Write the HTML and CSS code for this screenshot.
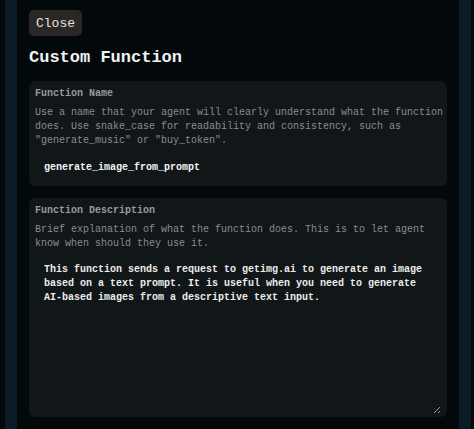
FILE: index.html
```html
<!DOCTYPE html>
<html lang="en">
<head>
    <meta charset="UTF-8">
    <title>Custom Function</title>
    <link rel="stylesheet" href="styles.css">
</head>
<body>
<div class="page">
    <div class="frame">
        <button class="close">Close</button>
        <h1>Custom Function</h1>

        <div class="card">
            <div class="label">Function Name</div>
            <p class="hint">Use a name that your agent will clearly understand what the function does. Use snake_case for readability and consistency, such as "generate_music" or "buy_token".</p>
            <input class="field" type="text" value="generate_image_from_prompt">
        </div>

        <div class="card">
            <div class="label">Function Description</div>
            <p class="hint">Brief explanation of what the function does. This is to let agent know when should they use it.</p>
            <textarea class="field area">This function sends a request to getimg.ai to generate an image based on a text prompt. It is useful when you need to generate AI-based images from a descriptive text input.</textarea>
        </div>
    </div>
</div>
</body>
</html>
```

FILE: styles.css
```css
html, body {
    margin: 0;
    height: 100%;
    background-color: #030a0d;
}

body {
    font-family: "Liberation Mono", "DejaVu Sans Mono", monospace;
}

.page {
    height: 429px;
    display: flex;
    padding: 0 3px 0 5px;
    overflow: hidden;
}

.frame {
    flex: 1;
    background-color: #03080a;
    border-left: 12px solid #0b1b24;
    border-right: 12px solid #0b1b24;
    padding: 10px 12px;
}

.close {
    width: 53px;
    height: 26px;
    padding: 0;
    border: none;
    border-radius: 5px;
    background-color: #2a2726;
    color: #e4e4e4;
    font-family: inherit;
    font-size: 13px;
    display: block;
}

h1 {
    margin: 12px 0 13px;
    font-size: 17px;
    line-height: 20px;
    font-weight: bold;
    color: #f2f2f2;
}

.card {
    background-color: #111619;
    border-radius: 6px;
    padding: 6px 6px 3px;
    margin-bottom: 12px;
}

.label {
    font-size: 10px;
    line-height: 14px;
    font-weight: bold;
    color: #9a9a9a;
}

.hint {
    margin: 5px -6px 0 0;
    font-size: 10px;
    line-height: 14px;
    color: #8c8c8c;
}

.field {
    display: block;
    width: 100%;
    box-sizing: border-box;
    margin-top: 5px;
    padding: 8px 9px;
    border: none;
    outline: none;
    background-color: #111619;
    color: #f4f4f4;
    font-family: inherit;
    font-size: 10px;
    line-height: 14px;
    font-weight: bold;
}

.area {
    height: 158px;
    padding: 7px 9px;
    resize: vertical;
    color-scheme: dark;
    color: #ececec;
}
```
